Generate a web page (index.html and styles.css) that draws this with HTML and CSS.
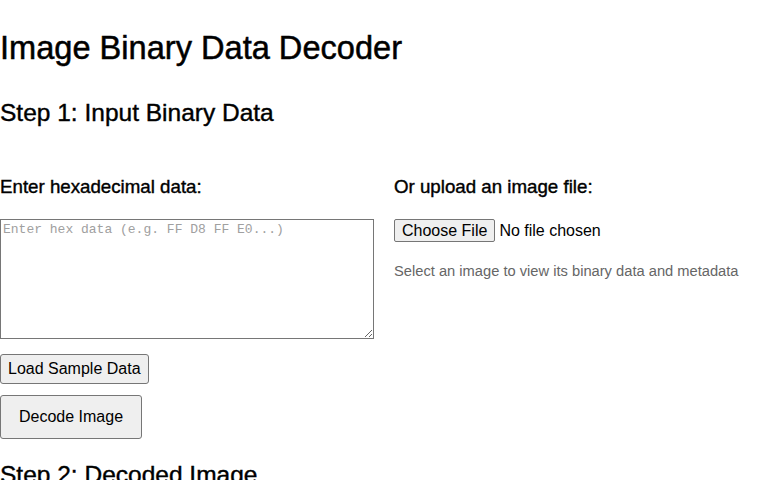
FILE: index.html
```html
<!DOCTYPE html>
<html lang="en">
<head>
    <meta charset="UTF-8">
    <meta name="viewport" content="width=device-width, initial-scale=1.0">
    <title>Image Binary Data Decoder</title>
    <link rel="stylesheet" href="styles.css">
</head>
<body>

    <h1 class="title">Image Binary Data Decoder</h1>

    <div class="section">
        <h2 class="step-title">Step 1: Input Binary Data</h2>

        <div class="input-row">
            <div class="input-col">
                <h3 class="input-label">Enter hexadecimal data:</h3>
                <textarea id="hexInput" class="hex-input" placeholder="Enter hex data (e.g. FF D8 FF E0...)"></textarea>
                <button class="sample-button" id="sampleButton">Load Sample Data</button>
            </div>

            <div class="input-col">
                <h3 class="input-label">Or upload an image file:</h3>
                <input type="file" id="fileInput" class="file-input" accept="image/*">
                <p class="hint">Select an image to view its binary data and metadata</p>
            </div>
        </div>

        <button class="decode-button" id="decodeButton">Decode Image</button>
    </div>

    <div class="section">
        <h2 class="step-title step-two">Step 2: Decoded Image</h2>
    </div>

</body>
</html>
```

FILE: styles.css
```css
body {
    font-family: "Liberation Sans", Arial, sans-serif;
    margin: 0;
    color: #000;
}
.title {
    font-size: 32.6px;
    font-weight: normal;
    line-height: 37px;
    margin: 29px 0 33px;
    -webkit-text-stroke: 0.5px #000;
}
.step-title {
    font-size: 24.5px;
    font-weight: normal;
    line-height: 28px;
    margin: 0;
    -webkit-text-stroke: 0.4px #000;
}
.step-two {
    margin-top: 22px;
}
.input-row {
    display: flex;
    gap: 20px;
    margin-top: 49px;
}
.input-col {
    flex: 1;
    min-width: 0;
}
.input-label {
    font-size: 18.72px;
    font-weight: normal;
    line-height: 22px;
    margin: 0 0 21px;
    -webkit-text-stroke: 0.4px #000;
}
.hex-input {
    display: block;
    box-sizing: border-box;
    width: 100%;
    height: 120px;
    padding: 2px;
    font-family: "Liberation Mono", "Courier New", monospace;
    font-size: 13px;
    border: 1px solid #767676;
    border-radius: 0;
}
.hex-input::placeholder {
    color: #a0a0a0;
}
.sample-button,
.decode-button {
    display: block;
    font-family: "Liberation Sans", Arial, sans-serif;
    font-size: 16px;
    line-height: 18px;
    color: #000;
    background-color: #efefef;
    border: 1px solid #767676;
    border-radius: 3px;
}
.sample-button {
    margin-top: 15px;
    padding: 5px 7px;
}
.decode-button {
    margin-top: 11px;
    padding: 12px 18px;
}
.file-input {
    display: block;
    margin-top: 1px;
    font-family: "Liberation Sans", Arial, sans-serif;
    font-size: 16px;
}
.file-input::file-selector-button {
    font-family: "Liberation Sans", Arial, sans-serif;
    font-size: 16px;
    line-height: 19px;
    background-color: #efefef;
    border: 1px solid #767676;
    border-radius: 2px;
    padding: 1px 7px;
    margin-right: 4px;
}
.hint {
    font-size: 14.7px;
    line-height: 16px;
    color: #666;
    margin: 21px 0 0;
}
```
